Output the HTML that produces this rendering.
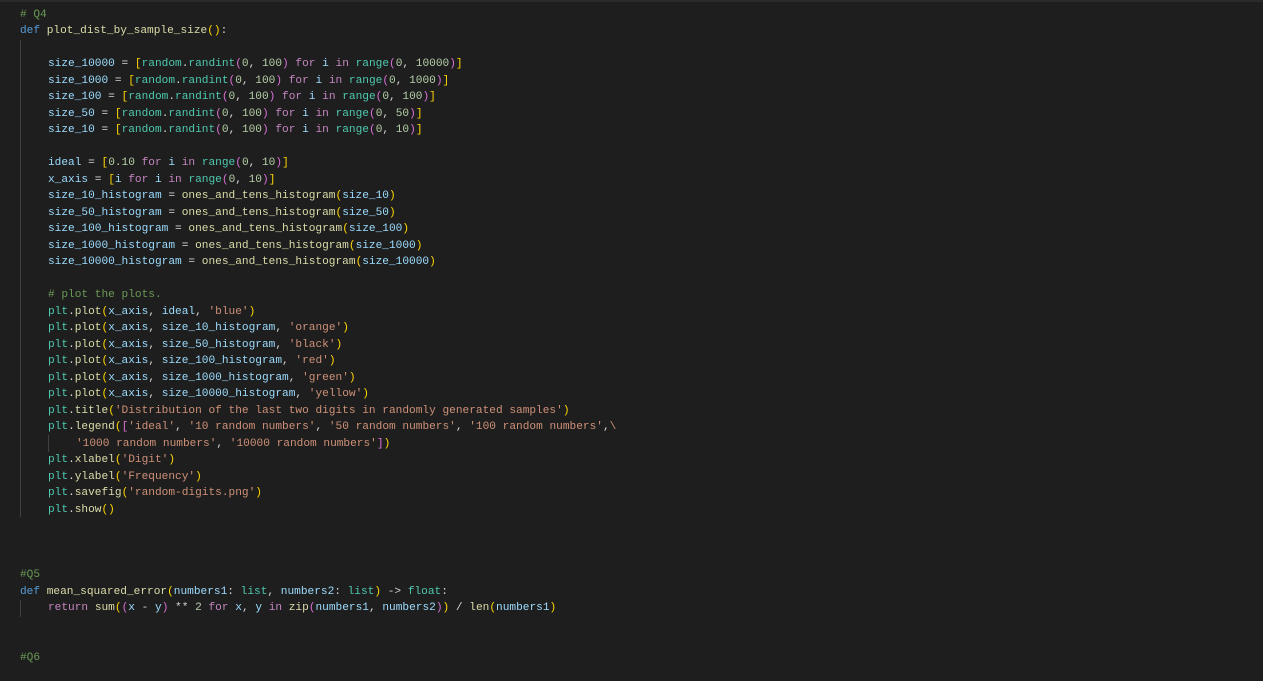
<!DOCTYPE html>
<html><head><meta charset="utf-8"><style>
html,body{margin:0;padding:0;background:#1e1e1e;width:1263px;height:681px;overflow:hidden}
.top{position:absolute;left:0;top:0;width:1263px;height:2px;background:#2a2a2a}
pre{position:absolute;left:20px;top:7px;margin:0;font-family:"Liberation Mono",monospace;font-size:11.15px;line-height:16.48px;color:#d4d4d4;white-space:pre}
.g{position:absolute;width:1px;background:#404040}
.c{color:#6a9955}.k{color:#569cd6}.f{color:#dcdcaa}.v{color:#9cdcfe}.n{color:#b5cea8}.p{color:#c586c0}.s{color:#ce9178}.t{color:#4ec9b0}.b1{color:#ffd700}.b2{color:#da70d6}.b3{color:#179fff}
i{font-style:normal;display:inline-block;width:28px}
</style></head><body>
<div class="top"></div>
<div class="g" style="left:20px;top:40px;height:477px"></div>
<div class="g" style="left:48px;top:435px;height:17px"></div>
<div class="g" style="left:20px;top:600px;height:17px"></div>
<pre><span class="c"># Q4</span>
<span class="k">def</span> <span class="f">plot_dist_by_sample_size</span><span class="b1">()</span>:

<i></i><span class="v">size_10000</span> = <span class="b1">[</span><span class="t">random</span>.<span class="t">randint</span><span class="b2">(</span><span class="n">0</span>, <span class="n">100</span><span class="b2">)</span> <span class="p">for</span> <span class="v">i</span> <span class="p">in</span> <span class="t">range</span><span class="b2">(</span><span class="n">0</span>, <span class="n">10000</span><span class="b2">)</span><span class="b1">]</span>
<i></i><span class="v">size_1000</span> = <span class="b1">[</span><span class="t">random</span>.<span class="t">randint</span><span class="b2">(</span><span class="n">0</span>, <span class="n">100</span><span class="b2">)</span> <span class="p">for</span> <span class="v">i</span> <span class="p">in</span> <span class="t">range</span><span class="b2">(</span><span class="n">0</span>, <span class="n">1000</span><span class="b2">)</span><span class="b1">]</span>
<i></i><span class="v">size_100</span> = <span class="b1">[</span><span class="t">random</span>.<span class="t">randint</span><span class="b2">(</span><span class="n">0</span>, <span class="n">100</span><span class="b2">)</span> <span class="p">for</span> <span class="v">i</span> <span class="p">in</span> <span class="t">range</span><span class="b2">(</span><span class="n">0</span>, <span class="n">100</span><span class="b2">)</span><span class="b1">]</span>
<i></i><span class="v">size_50</span> = <span class="b1">[</span><span class="t">random</span>.<span class="t">randint</span><span class="b2">(</span><span class="n">0</span>, <span class="n">100</span><span class="b2">)</span> <span class="p">for</span> <span class="v">i</span> <span class="p">in</span> <span class="t">range</span><span class="b2">(</span><span class="n">0</span>, <span class="n">50</span><span class="b2">)</span><span class="b1">]</span>
<i></i><span class="v">size_10</span> = <span class="b1">[</span><span class="t">random</span>.<span class="t">randint</span><span class="b2">(</span><span class="n">0</span>, <span class="n">100</span><span class="b2">)</span> <span class="p">for</span> <span class="v">i</span> <span class="p">in</span> <span class="t">range</span><span class="b2">(</span><span class="n">0</span>, <span class="n">10</span><span class="b2">)</span><span class="b1">]</span>

<i></i><span class="v">ideal</span> = <span class="b1">[</span><span class="n">0.10</span> <span class="p">for</span> <span class="v">i</span> <span class="p">in</span> <span class="t">range</span><span class="b2">(</span><span class="n">0</span>, <span class="n">10</span><span class="b2">)</span><span class="b1">]</span>
<i></i><span class="v">x_axis</span> = <span class="b1">[</span><span class="v">i</span> <span class="p">for</span> <span class="v">i</span> <span class="p">in</span> <span class="t">range</span><span class="b2">(</span><span class="n">0</span>, <span class="n">10</span><span class="b2">)</span><span class="b1">]</span>
<i></i><span class="v">size_10_histogram</span> = <span class="f">ones_and_tens_histogram</span><span class="b1">(</span><span class="v">size_10</span><span class="b1">)</span>
<i></i><span class="v">size_50_histogram</span> = <span class="f">ones_and_tens_histogram</span><span class="b1">(</span><span class="v">size_50</span><span class="b1">)</span>
<i></i><span class="v">size_100_histogram</span> = <span class="f">ones_and_tens_histogram</span><span class="b1">(</span><span class="v">size_100</span><span class="b1">)</span>
<i></i><span class="v">size_1000_histogram</span> = <span class="f">ones_and_tens_histogram</span><span class="b1">(</span><span class="v">size_1000</span><span class="b1">)</span>
<i></i><span class="v">size_10000_histogram</span> = <span class="f">ones_and_tens_histogram</span><span class="b1">(</span><span class="v">size_10000</span><span class="b1">)</span>

<i></i><span class="c"># plot the plots.</span>
<i></i><span class="t">plt</span>.<span class="f">plot</span><span class="b1">(</span><span class="v">x_axis</span>, <span class="v">ideal</span>, <span class="s">'blue'</span><span class="b1">)</span>
<i></i><span class="t">plt</span>.<span class="f">plot</span><span class="b1">(</span><span class="v">x_axis</span>, <span class="v">size_10_histogram</span>, <span class="s">'orange'</span><span class="b1">)</span>
<i></i><span class="t">plt</span>.<span class="f">plot</span><span class="b1">(</span><span class="v">x_axis</span>, <span class="v">size_50_histogram</span>, <span class="s">'black'</span><span class="b1">)</span>
<i></i><span class="t">plt</span>.<span class="f">plot</span><span class="b1">(</span><span class="v">x_axis</span>, <span class="v">size_100_histogram</span>, <span class="s">'red'</span><span class="b1">)</span>
<i></i><span class="t">plt</span>.<span class="f">plot</span><span class="b1">(</span><span class="v">x_axis</span>, <span class="v">size_1000_histogram</span>, <span class="s">'green'</span><span class="b1">)</span>
<i></i><span class="t">plt</span>.<span class="f">plot</span><span class="b1">(</span><span class="v">x_axis</span>, <span class="v">size_10000_histogram</span>, <span class="s">'yellow'</span><span class="b1">)</span>
<i></i><span class="t">plt</span>.<span class="f">title</span><span class="b1">(</span><span class="s">'Distribution of the last two digits in randomly generated samples'</span><span class="b1">)</span>
<i></i><span class="t">plt</span>.<span class="f">legend</span><span class="b1">(</span><span class="b2">[</span><span class="s">'ideal'</span>, <span class="s">'10 random numbers'</span>, <span class="s">'50 random numbers'</span>, <span class="s">'100 random numbers'</span>,<span class="s">\</span>
<i></i><i></i><span class="s">'1000 random numbers'</span>, <span class="s">'10000 random numbers'</span><span class="b2">]</span><span class="b1">)</span>
<i></i><span class="t">plt</span>.<span class="f">xlabel</span><span class="b1">(</span><span class="s">'Digit'</span><span class="b1">)</span>
<i></i><span class="t">plt</span>.<span class="f">ylabel</span><span class="b1">(</span><span class="s">'Frequency'</span><span class="b1">)</span>
<i></i><span class="t">plt</span>.<span class="f">savefig</span><span class="b1">(</span><span class="s">'random-digits.png'</span><span class="b1">)</span>
<i></i><span class="t">plt</span>.<span class="f">show</span><span class="b1">()</span>



<span class="c">#Q5</span>
<span class="k">def</span> <span class="f">mean_squared_error</span><span class="b1">(</span><span class="v">numbers1</span>: <span class="t">list</span>, <span class="v">numbers2</span>: <span class="t">list</span><span class="b1">)</span> -&gt; <span class="t">float</span>:
<i></i><span class="p">return</span> <span class="f">sum</span><span class="b1">(</span><span class="b2">(</span><span class="v">x</span> - <span class="v">y</span><span class="b2">)</span> ** <span class="n">2</span> <span class="p">for</span> <span class="v">x</span>, <span class="v">y</span> <span class="p">in</span> <span class="f">zip</span><span class="b2">(</span><span class="v">numbers1</span>, <span class="v">numbers2</span><span class="b2">)</span><span class="b1">)</span> / <span class="f">len</span><span class="b1">(</span><span class="v">numbers1</span><span class="b1">)</span>


<span class="c">#Q6</span>
</pre>
</body></html>
